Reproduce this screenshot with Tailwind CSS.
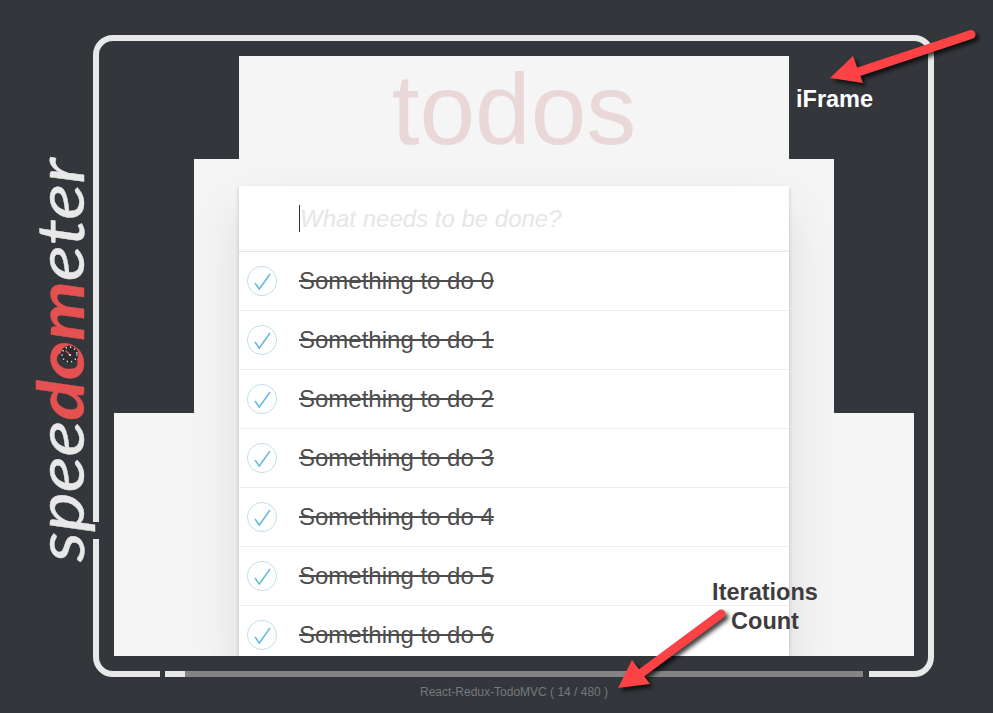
<!DOCTYPE html>
<html lang="en">
<head>
  <meta charset="UTF-8" />
  <title>Speedometer</title>
  <script src="https://cdn.jsdelivr.net/npm/@tailwindcss/browser@4"></script>
</head>
<body class="bg-[#33363b] font-['Liberation_Sans',sans-serif]">
  <div class="relative h-[713px] w-[993px] overflow-hidden pl-[93px] pt-[35px]">
    <!-- frame -->
    <section class="relative h-[642px] w-[841px] rounded-[20px] border-[6px] border-[#e8e8e8] pb-[15px] pl-[15px] pr-[14px] pt-[15px]">
      <div class="relative flex h-[600px] w-[800px] flex-col items-center overflow-hidden">
        <div class="flex h-[103px] w-[550px] justify-center bg-[#f5f5f5] pt-[3px]">
          <h1 class="h-[100px] text-[100px] leading-[100px] text-[#af2f2f]/15">todos</h1>
        </div>
        <div class="h-[254px] w-[640px] bg-[#f5f5f5]"></div>
        <div class="w-full flex-1 bg-[#f5f5f5]"></div>

        <div class="absolute left-[125px] top-[130px] w-[550px] bg-white shadow-[0_2px_4px_rgba(0,0,0,0.2),0_25px_50px_rgba(0,0,0,0.1)]">
          <div class="flex h-[65px] items-center pl-[60px] shadow-[inset_0_-2px_1px_rgba(0,0,0,0.03)]">
            <span class="h-[27px] w-px bg-[#333]"></span>
            <span class="text-2xl italic text-[#e6e6e6]">What needs to be done?</span>
          </div>
          <ul id="todoList" class="border-t border-[#e6e6e6]"></ul>
        </div>

        <div class="absolute left-[598px] top-[522px] w-[106px] text-center text-[23.5px] font-bold leading-[29px] text-[#3f3c3e]">Iterations<br />Count</div>
      </div>

      <!-- progress strip sits on the bottom border -->
      <div class="absolute bottom-[-6px] left-[61px] h-[6px] w-[5px] bg-[#33363b]"></div>
      <div class="absolute bottom-[-6px] left-[86px] h-[6px] w-[678px] bg-[#848484]"></div>
      <div class="absolute bottom-[-6px] left-[764px] h-[6px] w-[6px] bg-[#33363b]"></div>
    </section>

    <p class="absolute left-[420px] top-[684px] text-xs text-[#77787c]">React-Redux-TodoMVC ( 14 / 480 )</p>
    <p class="absolute left-[796px] top-[85px] text-[23.5px] font-bold leading-[28px] text-white">iFrame</p>

    <!-- logo -->
    <div class="absolute left-[92px] top-[522px] h-[17px] w-[9px] bg-[#33363b]"></div>
    <div class="absolute left-[27px] top-[562px] origin-top-left -rotate-90 scale-x-[1.155] whitespace-nowrap font-['Lato',sans-serif] text-[65px] italic leading-[65px] text-[#e8e8e8] [-webkit-text-stroke:0.4px_#e8e8e8]">
      spee<span class="font-bold text-[#e55050] [-webkit-text-stroke:0.4px_#e55050]">dom</span>eter
    </div>
    <svg class="absolute left-[60px] top-[345px]" width="19" height="19" viewBox="0 0 19 19">
      <circle cx="9.5" cy="9.5" r="9" fill="#2a2c30" />
      <circle cx="9.5" cy="9.5" r="7.4" fill="none" stroke="#e8e8e8" stroke-width="1.6" stroke-dasharray="1.2 3.2" />
      <path d="M5.5 5.5 L10.5 10.5" stroke="#e55050" stroke-width="1.4" />
      <circle cx="10" cy="10" r="1.1" fill="#e8e8e8" />
    </svg>

    <!-- annotation arrows -->
    <svg class="absolute left-0 top-0 drop-shadow-[3px_3px_2px_rgba(0,0,0,0.75)]" width="993" height="713" viewBox="0 0 993 713">
      <path d="M971 34.5 L858 72" stroke="#fb4245" stroke-width="9" stroke-linecap="round" fill="none" />
      <path d="M830 78 L853 56 L863 83 Z" fill="#fb4245" />
      <path d="M721 614 L640 674" stroke="#fb4245" stroke-width="9" stroke-linecap="round" fill="none" />
      <path d="M618 688 L632 660 L650 684 Z" fill="#fb4245" />
    </svg>
  </div>

  <script>
    const list = document.getElementById("todoList");
    for (let i = 0; i < 7; i++) {
      list.innerHTML += `
        <li class="flex h-[59px] items-center border-b border-[#ededed]">
          <svg class="ml-[7px]" width="32" height="32" viewBox="0 0 32 32">
            <circle cx="16" cy="16" r="14.6" fill="none" stroke="#c3e0e9" stroke-width="1" />
            <path d="M9 18 L13.3 24 L24 9" fill="none" stroke="#6bbcdd" stroke-width="1.6" />
          </svg>
          <span class="ml-[21px] text-2xl text-[#4d4d4d] line-through">Something to do ${i}</span>
        </li>`;
    }
  </script>
</body>
</html>
